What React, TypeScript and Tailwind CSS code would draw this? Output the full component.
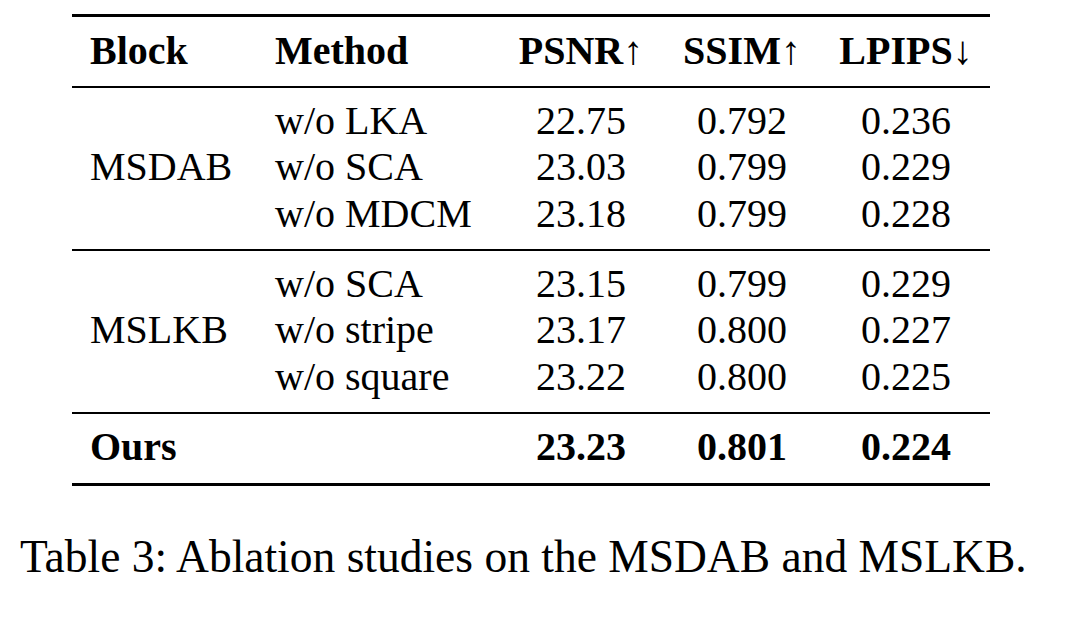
const groups = [
  {
    block: 'MSDAB',
    rows: [
      ['w/o LKA', '22.75', '0.792', '0.236'],
      ['w/o SCA', '23.03', '0.799', '0.229'],
      ['w/o MDCM', '23.18', '0.799', '0.228'],
    ],
  },
  {
    block: 'MSLKB',
    rows: [
      ['w/o SCA', '23.15', '0.799', '0.229'],
      ['w/o stripe', '23.17', '0.800', '0.227'],
      ['w/o square', '23.22', '0.800', '0.225'],
    ],
  },
]

function Row({ cells, bold }: { cells: string[]; bold?: boolean }) {
  return (
    <div className={`flex h-[46.5px] items-center pl-[18px] leading-[46.5px] ${bold ? 'font-bold' : ''}`}>
      <div className="w-[185px] whitespace-nowrap">{cells[0]}</div>
      <div className="w-[236px] whitespace-nowrap">{cells[1]}</div>
      <div className="w-[140px] text-center whitespace-nowrap">{cells[2]}</div>
      <div className="w-[182px] text-center whitespace-nowrap">{cells[3]}</div>
      <div className="w-[146px] text-center whitespace-nowrap">{cells[4]}</div>
    </div>
  )
}

export default function App() {
  return (
    <div
      className="h-[618px] w-[1072px] bg-white pt-[14px] text-black"
      style={{ fontFamily: '"Liberation Serif", "Times New Roman", serif' }}
    >
      <div className="ml-[72px] w-[918px] text-[40px]">
        <div className="h-[3px] bg-black" />
        <div className="pt-[10.5px] pb-[11.5px]">
          <Row bold cells={['Block', 'Method', 'PSNR↑', 'SSIM↑', 'LPIPS↓']} />
        </div>
        {groups.map((g) => (
          <div key={g.block}>
            <div className="h-[2px] bg-black" />
            <div className="pt-[10px] pb-[11.5px]">
              {g.rows.map((r, i) => (
                <Row key={r[0]} cells={[i === 1 ? g.block : '', ...r]} />
              ))}
            </div>
          </div>
        ))}
        <div className="h-[2px] bg-black" />
        <div className="pt-[10px] pb-[12.5px]">
          <Row bold cells={['Ours', '', '23.23', '0.801', '0.224']} />
        </div>
        <div className="h-[3px] bg-black" />
      </div>
      <div className="mt-[48px] pl-[20px] text-[45.5px] leading-[46px] whitespace-nowrap">
        Table 3: Ablation studies on the MSDAB and MSLKB.
      </div>
    </div>
  )
}
